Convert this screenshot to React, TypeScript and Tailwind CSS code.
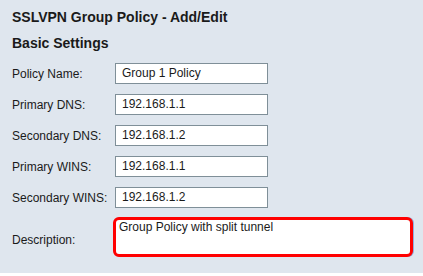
const rows = [
  { label: "Policy Name:", value: "Group 1 Policy" },
  { label: "Primary DNS:", value: "192.168.1.1" },
  { label: "Secondary DNS:", value: "192.168.1.2" },
  { label: "Primary WINS:", value: "192.168.1.1" },
  { label: "Secondary WINS:", value: "192.168.1.2" },
];

const App = () => {
  return (
    <div
      className="w-[423px] h-[276px] bg-white text-[#1a1a1a]"
      style={{ fontFamily: '"Liberation Sans", Arial, sans-serif' }}
    >
      <div className="h-[273px] bg-[#dfe6ee] pl-[12px] pt-[9px]">
        {/* TITLE */}
        <h1 className="text-[14px] font-bold leading-[16px]">
          SSLVPN Group Policy - Add/Edit
        </h1>
        <h2 className="mt-[10px] text-[14px] font-bold leading-[16px]">
          Basic Settings
        </h2>

        {/* FIELDS */}
        <div className="mt-[12px] flex flex-col gap-[10px]">
          {rows.map((row) => (
            <div key={row.label} className="flex items-center h-[21px]">
              <span className="w-[103px] text-[12px]">{row.label}</span>
              <div className="w-[153px] h-[21px] bg-white border border-[#7f8f98] pl-[6px] text-[12px] leading-[19px]">
                {row.value}
              </div>
            </div>
          ))}

          <div className="flex items-center -mt-[1px]">
            <span className="w-[101px] pt-[5px] text-[12px]">Description:</span>
            <div className="w-[300px] h-[40px] rounded-[6px] border-[3px] border-[#ff0000] bg-white pl-[3px] text-[12px] leading-[14px] shadow-[1px_0_0_0_#8fb0e0]">
              Group Policy with split tunnel
            </div>
          </div>
        </div>
      </div>
    </div>
  );
};

export default App;
